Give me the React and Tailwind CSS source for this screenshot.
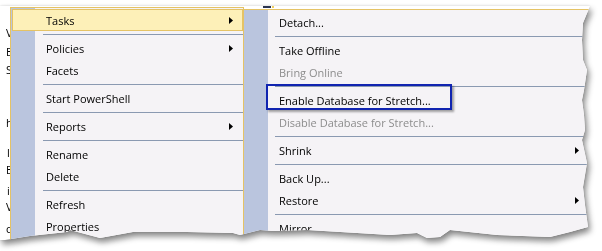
import React from "react";

const Arrow = () => (
  <svg width="4" height="7" viewBox="0 0 4 7" className="block shrink-0">
    <path d="M0 0 L4 3.5 L0 7 Z" fill="#000" />
  </svg>
);

function LeftItem({ label, arrow, active }) {
  return (
    <div
      className={
        active
          ? "ml-[1px] h-[22px] flex items-center justify-between border border-[#e5c365] bg-[#fdf0b8] pl-[33px] pr-[9px]"
          : "ml-[1px] h-[22px] flex items-center justify-between border border-transparent pl-[33px] pr-[9px]"
      }
    >
      <span className="text-black leading-none">{label}</span>
      {arrow ? <Arrow /> : null}
    </div>
  );
}

function LeftSep() {
  return (
    <div className="h-[6px] pt-[3px]">
      <div className="ml-[32px] h-px bg-[#8a99b1]" />
    </div>
  );
}

function RightItem({ label, arrow, disabled }) {
  return (
    <div className="h-[22px] flex items-center justify-between border border-transparent pl-[34px] pr-[10px]">
      <span className={disabled ? "text-[#8d8d8d] leading-none" : "text-black leading-none"}>{label}</span>
      {arrow ? <Arrow /> : null}
    </div>
  );
}

function RightSep() {
  return (
    <div className="h-[6px] pt-[3px]">
      <div className="ml-[31px] h-px bg-[#8a99b1]" />
    </div>
  );
}

export default function App() {
  return (
    <div className="w-[602px] h-[251px] bg-white overflow-hidden font-['Open_Sans',sans-serif] text-[11px]">
      <div className="[filter:drop-shadow(2px_4px_3px_rgba(0,0,0,0.45))_drop-shadow(0px_0px_1px_rgba(0,0,0,0.15))]">
        <div className="relative w-[602px] h-[251px] bg-white flex [clip-path:polygon(0px_6px,590px_6px,583px_23px,582px_40px,583px_60px,587px_70px,584px_90px,582px_100px,584px_115px,585px_130px,582px_140px,587px_163px,583px_187px,585px_205px,588px_227px,570px_232px,550px_237px,497px_235px,450px_230px,440px_237px,427px_238px,417px_233px,390px_235px,357px_233px,307px_230px,273px_231px,260px_230px,240px_235px,233px_233px,187px_232px,133px_232px,100px_238px,70px_230px,67px_232px,30px_236px,5px_240px,0px_240px)]">
          {/* background tree fragments, mostly hidden behind the menu */}
          <div className="w-[10px] shrink-0 overflow-hidden text-black leading-none">
            <div className="ml-[6px] mt-[27px]">V</div>
            <div className="ml-[6px] mt-[8px]">E</div>
            <div className="ml-[6px] mt-[7px]">S</div>
            <div className="ml-[6px] mt-[42px]">h</div>
            <div className="ml-[7px] mt-[19px]">l</div>
            <div className="ml-[6px] mt-[6px]">E</div>
            <div className="ml-[7px] mt-[10px]">i</div>
            <div className="ml-[6px] mt-[5px]">V</div>
            <div className="ml-[6px] mt-[11px]">c</div>
          </div>

          {/* left menu */}
          <div className="w-[234px] shrink-0 mt-[7px] self-start h-[240px] border-l border-r border-t border-[#e5c365] bg-[linear-gradient(to_right,#bac5de_0px,#bac5de_24px,#f5f3f6_24px)] pt-[1px]">
            <LeftItem label="Tasks" arrow active />
            <LeftSep />
            <LeftItem label="Policies" arrow />
            <LeftItem label="Facets" />
            <LeftSep />
            <LeftItem label="Start PowerShell" />
            <LeftSep />
            <LeftItem label="Reports" arrow />
            <LeftSep />
            <LeftItem label="Rename" />
            <LeftItem label="Delete" />
            <LeftSep />
            <LeftItem label="Refresh" />
            <LeftItem label="Properties" />
          </div>

          {/* right column */}
          <div className="w-[346px] shrink-0 flex flex-col">
            <div className="h-[9px] flex items-end pl-[19px] pb-[1px]">
              <div className="w-[8px] h-[2px] bg-[#2b3550]" />
              <div className="w-[2px] h-[2px] ml-[1px] bg-[#f0d060]" />
            </div>
            <div className="flex-1 border-t border-[#e5c365] bg-[linear-gradient(to_right,#bac5de_0px,#bac5de_24px,#f5f3f6_24px)] pt-[1px]">
              <RightItem label="Detach..." />
              <RightSep />
              <RightItem label="Take Offline" />
              <RightItem label="Bring Online" disabled />
              <RightSep />
              <RightItem label="Enable Database for Stretch..." />
              <RightItem label="Disable Database for Stretch..." disabled />
              <RightSep />
              <RightItem label="Shrink" arrow />
              <RightSep />
              <RightItem label="Back Up..." />
              <RightItem label="Restore" arrow />
              <RightSep />
              <RightItem label="Mirror..." />
            </div>
          </div>

          {/* annotation box */}
          <div className="absolute left-[266px] top-[84px] w-[186px] h-[26px] border-2 border-[#1024b0] shadow-[2px_2px_2px_rgba(0,0,0,0.35)]" />
        </div>
      </div>
    </div>
  );
}
